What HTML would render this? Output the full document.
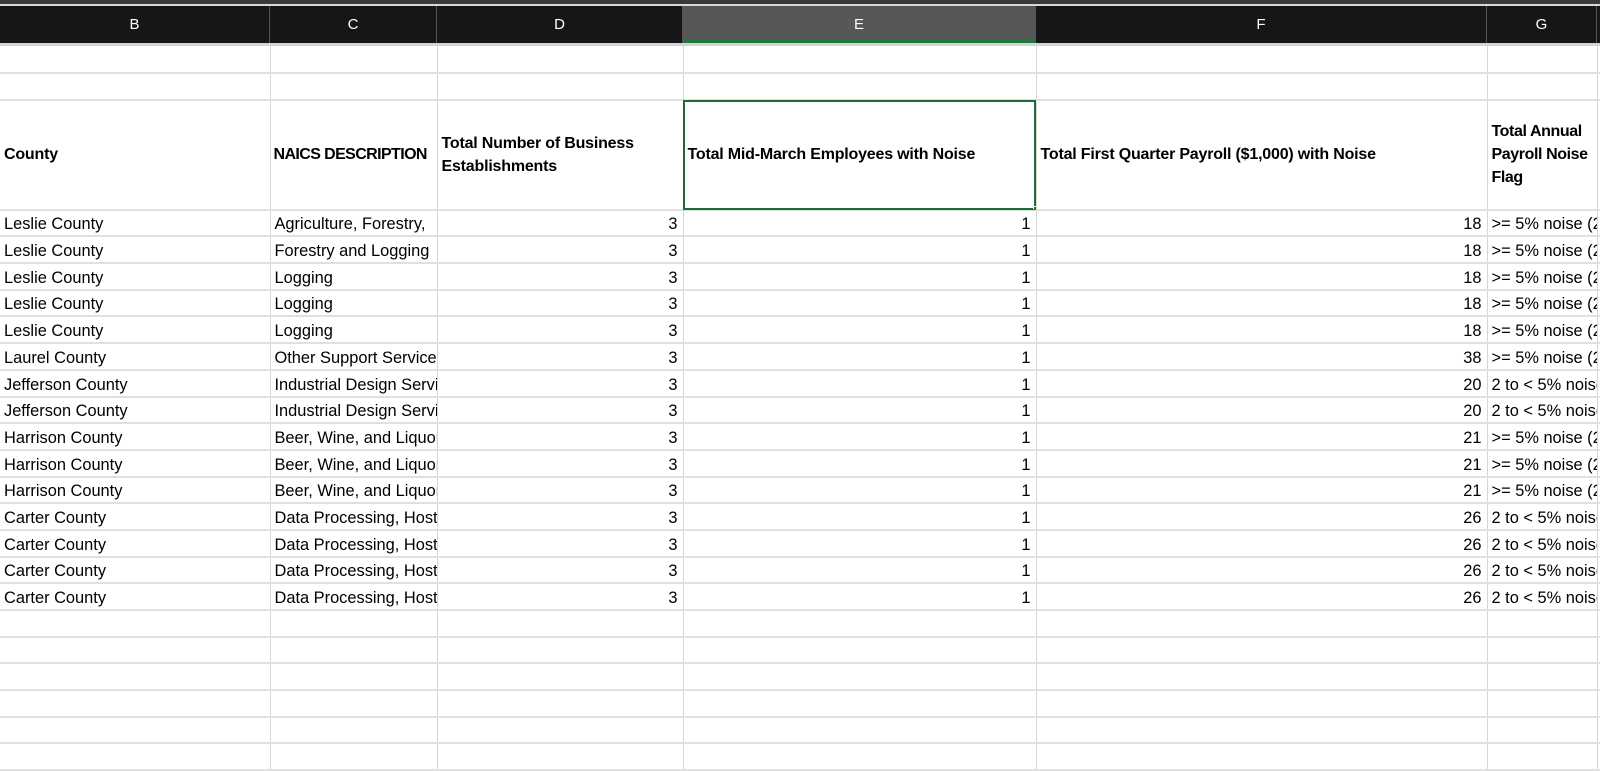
<!DOCTYPE html>
<html><head><meta charset="utf-8"><style>
*{margin:0;padding:0;box-sizing:border-box}
body{width:1600px;height:732px;overflow:hidden;background:#fff;font-family:"Liberation Sans",Arial,sans-serif;position:relative}
.top{position:absolute;left:0;top:0;width:1600px;height:6px;background:#3a3a3a;border-bottom:2px solid #d8d8d8}
.hdr{position:absolute;top:6px;height:37px;background:#161616;color:#fff;font-size:15px;text-align:center;line-height:37px;border-right:1px solid #555}
.hsep{position:absolute;left:0;top:43px;width:1600px;height:3px;background:#d4d4d4}
table{position:absolute;left:0;top:46px;width:1617px;border-collapse:collapse;table-layout:fixed}
td{border-right:1px solid #d6d6d6;border-bottom:2px solid #e0e0e0;font-size:16.4px;color:#000;white-space:nowrap;overflow:hidden;padding:0 4px;height:26.7px;line-height:22px;vertical-align:bottom}
td.n{text-align:right;padding-right:5px}
tr.h td{font-weight:bold;vertical-align:middle;white-space:nowrap;line-height:23px;font-size:16px;letter-spacing:-0.2px}
</style></head><body>
<div class="top"></div>
<div class="hdr" style="left:0;width:270px">B</div>
<div class="hdr" style="left:270px;width:167px">C</div>
<div class="hdr" style="left:437px;width:246px">D</div>
<div class="hdr" style="left:683px;width:353px;background:#575757;border-bottom:3px solid #1e7a3e;height:37px">E</div>
<div class="hdr" style="left:1036px;width:451px">F</div>
<div class="hdr" style="left:1487px;width:110px">G</div>
<div class="hdr" style="left:1597px;width:10px"></div>
<div class="hsep"></div>
<table>
<colgroup><col style="width:270px"><col style="width:167px"><col style="width:246px"><col style="width:353px"><col style="width:451px"><col style="width:110px"><col style="width:20px"></colgroup>
<tr><td style="height:25px"></td><td></td><td></td><td></td><td></td><td></td><td></td></tr>
<tr><td style="height:27px"></td><td></td><td></td><td></td><td></td><td></td><td></td></tr>
<tr class="h"><td style="height:110px">County</td><td style="letter-spacing:-0.6px;padding-left:3px">NAICS DESCRIPTION</td><td>Total Number of Business<br>Establishments</td><td style="outline:2px solid #1e6b34;outline-offset:-2px;position:relative">Total Mid-March Employees with Noise<span style="position:absolute;right:-3px;bottom:-3px;width:6px;height:6px;background:#1e6b34;border:1px solid #fff"></span></td><td>Total First Quarter Payroll ($1,000) with Noise</td><td style="letter-spacing:-0.4px">Total Annual<br>Payroll Noise<br>Flag</td><td></td></tr>
<tr><td>Leslie County</td><td>Agriculture, Forestry,</td><td class="n">3</td><td class="n">1</td><td class="n">18</td><td>&gt;= 5% noise (2</td><td></td></tr>
<tr><td>Leslie County</td><td>Forestry and Logging</td><td class="n">3</td><td class="n">1</td><td class="n">18</td><td>&gt;= 5% noise (2</td><td></td></tr>
<tr><td>Leslie County</td><td>Logging</td><td class="n">3</td><td class="n">1</td><td class="n">18</td><td>&gt;= 5% noise (2</td><td></td></tr>
<tr><td>Leslie County</td><td>Logging</td><td class="n">3</td><td class="n">1</td><td class="n">18</td><td>&gt;= 5% noise (2</td><td></td></tr>
<tr><td>Leslie County</td><td>Logging</td><td class="n">3</td><td class="n">1</td><td class="n">18</td><td>&gt;= 5% noise (2</td><td></td></tr>
<tr><td>Laurel County</td><td>Other Support Services</td><td class="n">3</td><td class="n">1</td><td class="n">38</td><td>&gt;= 5% noise (2</td><td></td></tr>
<tr><td>Jefferson County</td><td>Industrial Design Services</td><td class="n">3</td><td class="n">1</td><td class="n">20</td><td>2 to &lt; 5% noise</td><td></td></tr>
<tr><td>Jefferson County</td><td>Industrial Design Services</td><td class="n">3</td><td class="n">1</td><td class="n">20</td><td>2 to &lt; 5% noise</td><td></td></tr>
<tr><td>Harrison County</td><td>Beer, Wine, and Liquor</td><td class="n">3</td><td class="n">1</td><td class="n">21</td><td>&gt;= 5% noise (2</td><td></td></tr>
<tr><td>Harrison County</td><td>Beer, Wine, and Liquor</td><td class="n">3</td><td class="n">1</td><td class="n">21</td><td>&gt;= 5% noise (2</td><td></td></tr>
<tr><td>Harrison County</td><td>Beer, Wine, and Liquor</td><td class="n">3</td><td class="n">1</td><td class="n">21</td><td>&gt;= 5% noise (2</td><td></td></tr>
<tr><td>Carter County</td><td>Data Processing, Hosting</td><td class="n">3</td><td class="n">1</td><td class="n">26</td><td>2 to &lt; 5% noise</td><td></td></tr>
<tr><td>Carter County</td><td>Data Processing, Hosting</td><td class="n">3</td><td class="n">1</td><td class="n">26</td><td>2 to &lt; 5% noise</td><td></td></tr>
<tr><td>Carter County</td><td>Data Processing, Hosting</td><td class="n">3</td><td class="n">1</td><td class="n">26</td><td>2 to &lt; 5% noise</td><td></td></tr>
<tr><td>Carter County</td><td>Data Processing, Hosting</td><td class="n">3</td><td class="n">1</td><td class="n">26</td><td>2 to &lt; 5% noise</td><td></td></tr>
<tr><td></td><td></td><td></td><td></td><td></td><td></td><td></td></tr>
<tr><td></td><td></td><td></td><td></td><td></td><td></td><td></td></tr>
<tr><td></td><td></td><td></td><td></td><td></td><td></td><td></td></tr>
<tr><td></td><td></td><td></td><td></td><td></td><td></td><td></td></tr>
<tr><td></td><td></td><td></td><td></td><td></td><td></td><td></td></tr>
<tr><td></td><td></td><td></td><td></td><td></td><td></td><td></td></tr>
</table>
</body></html>
